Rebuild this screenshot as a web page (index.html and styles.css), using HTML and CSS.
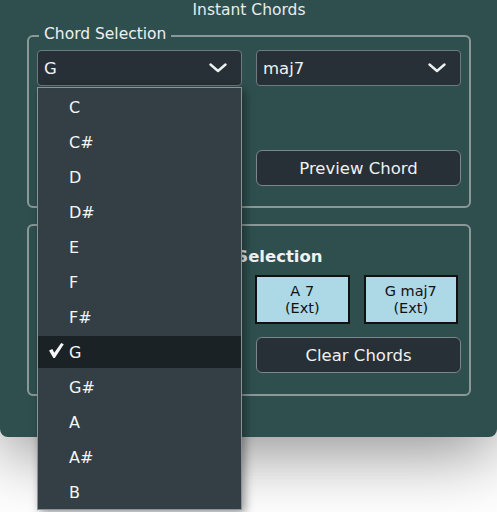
FILE: index.html
```html
<!DOCTYPE html>
<html lang="en">
<head>
<meta charset="utf-8">
<title>Instant Chords</title>
<link rel="stylesheet" href="styles.css">
</head>
<body>
<div class="panel">
  <div class="title">Instant Chords</div>
  <fieldset class="group sel">
    <legend>Chord Selection</legend>
    <div class="grid">
      <div class="select-wrap">
        <div class="select"><span>G</span><svg class="chev" width="18" height="10" viewBox="0 0 18 10"><polyline points="1.5,1.5 9,8 16.5,1.5" fill="none" stroke="#eef0f0" stroke-width="2.4" stroke-linecap="round" stroke-linejoin="round"/></svg></div>
        <ul class="dropdown">
          <li class="opt">C</li>
          <li class="opt">C#</li>
          <li class="opt">D</li>
          <li class="opt">D#</li>
          <li class="opt">E</li>
          <li class="opt">F</li>
          <li class="opt">F#</li>
          <li class="opt selected"><svg class="check" width="15" height="15" viewBox="0 0 15 15"><path d="M0 7.6 L3.3 6 L5.3 9.8 L12.2 0 L14.8 1.3 L5.8 15 L4.4 15 Z" fill="#f6f6f6"/></svg>G</li>
          <li class="opt">G#</li>
          <li class="opt">A</li>
          <li class="opt">A#</li>
          <li class="opt">B</li>
        </ul>
      </div>
      <div class="select"><span>maj7</span><svg class="chev" width="18" height="10" viewBox="0 0 18 10"><polyline points="1.5,1.5 9,8 16.5,1.5" fill="none" stroke="#eef0f0" stroke-width="2.4" stroke-linecap="round" stroke-linejoin="round"/></svg></div>
      <div class="select"></div>
      <div class="cell"></div>
      <div class="btn"></div>
      <button class="btn">Preview Chord</button>
    </div>
  </fieldset>
  <fieldset class="group saved">
    <h3 class="heading">Chord Selection</h3>
    <div class="chords">
      <div class="chord"></div>
      <div class="chord"></div>
      <div class="chord"><span>A 7</span><span>(Ext)</span></div>
      <div class="chord"><span>G maj7</span><span>(Ext)</span></div>
    </div>
    <div class="grid">
      <div class="btn"></div>
      <button class="btn">Clear Chords</button>
    </div>
  </fieldset>
</div>
</body>
</html>
```
FILE: styles.css
```css
* { box-sizing: border-box; }

html, body {
  margin: 0;
  height: 512px;
  overflow: hidden;
}

body {
  background: #ffffff;
  font-family: "DejaVu Sans", Verdana, sans-serif;
}

.panel {
  background: #2f4f4f;
  border-radius: 0 0 8px 8px;
  padding: 1px 26px 41px 27px;
  box-shadow: 0 15px 70px rgba(0, 0, 0, 0.45);
}

.title {
  text-align: center;
  color: #e8ecec;
  font-size: 15.5px;
  line-height: 19px;
}

.group {
  border: 2px solid #8b9898;
  border-radius: 6px;
  margin: 0;
  min-width: 0;
}

.sel {
  margin-top: 5px;
  padding: 3px 8px 20px;
}

.sel legend {
  color: #eef0f0;
  font-size: 15.5px;
  line-height: 18px;
  padding: 0 5px 4px;
  margin-left: 2px;
}

.grid {
  display: grid;
  grid-template-columns: 205px 205px;
  grid-auto-rows: 36px;
  column-gap: 14px;
  row-gap: 14px;
}

.select-wrap {
  position: relative;
}

.select {
  height: 36px;
  background: #263036;
  border: 1px solid #6e7b7e;
  border-radius: 4px;
  padding: 0 14px 0 6px;
  display: flex;
  align-items: center;
  justify-content: space-between;
  color: #f0f2f2;
  font-size: 16.5px;
}

.chev {
  display: block;
  flex: none;
}

.dropdown {
  position: absolute;
  left: 0;
  top: 37px;
  width: 205px;
  margin: 0;
  padding: 3px 0 1px;
  list-style: none;
  background: #333e45;
  border: 1px solid #8a9396;
  box-shadow: 3px 3px 9px rgba(0, 0, 0, 0.4);
  display: flex;
  flex-direction: column;
  gap: 3px;
  z-index: 10;
}

.opt {
  position: relative;
  height: 32px;
  display: flex;
  align-items: center;
  padding-left: 31px;
  color: #f4f6f6;
  font-size: 16px;
}

.opt.selected {
  background: #1b2226;
}

.check {
  position: absolute;
  left: 11px;
  top: 7px;
}

.btn {
  height: 36px;
  margin: 0;
  background: #263036;
  border: 1px solid #7b8789;
  border-radius: 6px;
  color: #f0f2f2;
  font-family: "DejaVu Sans", Verdana, sans-serif;
  font-size: 16.5px;
  padding: 0;
}

.saved {
  margin-top: 16px;
  padding: 21px 8px 21px;
}

.heading {
  margin: 0 0 8px;
  text-align: center;
  color: #f0f2f2;
  font-size: 16.5px;
  line-height: 20px;
  font-weight: bold;
}

.chords {
  display: grid;
  grid-template-columns: repeat(4, 1fr);
  column-gap: 14px;
  padding: 0 3px 0 1px;
  margin-bottom: 13px;
}

.chord {
  height: 49px;
  background: #add8e6;
  border: 2px solid #111111;
  display: flex;
  flex-direction: column;
  align-items: center;
  justify-content: center;
  color: #111111;
  font-size: 14.5px;
  line-height: 17px;
}
```
